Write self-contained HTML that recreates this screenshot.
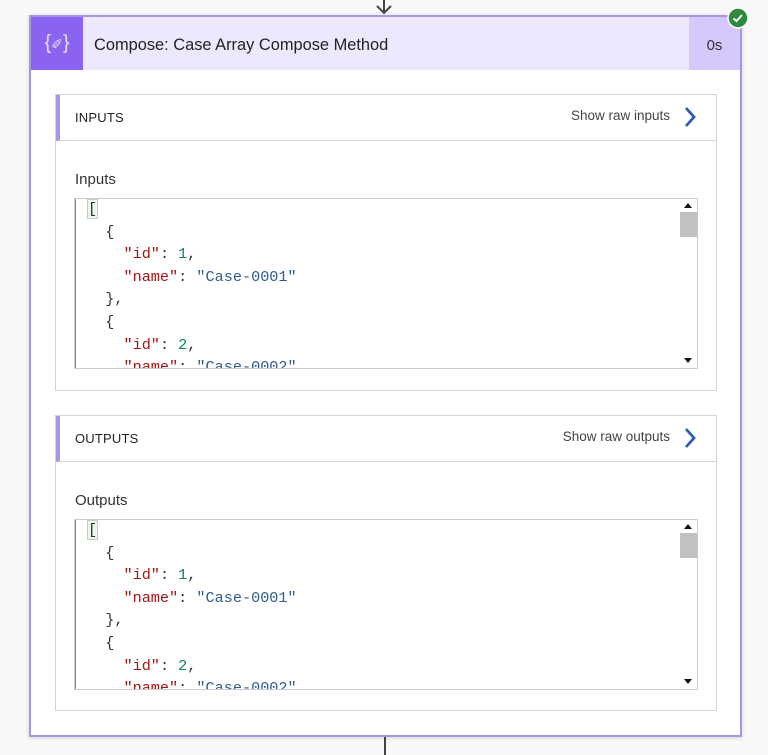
<!DOCTYPE html>
<html><head><style>
*{margin:0;padding:0;box-sizing:border-box}
body{width:768px;height:755px;background:#f8f8f8;font-family:"Liberation Sans",sans-serif;position:relative;overflow:hidden}
.card{position:absolute;left:29px;top:15px;width:713px;height:722px;background:#fff;border:2px solid #a796e6;box-shadow:0 1px 4px rgba(0,0,0,.15)}
.hdr{position:absolute;left:0;top:0;width:709px;height:53px;background:#ede8fd}
.ico{position:absolute;left:0;top:0;width:52px;height:53px;background:#8a63f0;color:#e6ddff;font-size:20px;text-align:center;line-height:53px}
.title{position:absolute;left:63px;top:0;line-height:56px;font-size:16.4px;color:#222}
.time{position:absolute;right:0;top:0;width:51px;height:53px;background:#d4c9fa;text-align:center;line-height:57px;font-size:15px;color:#333}
.sec{position:absolute;left:24px;width:662px;border:1px solid #d4d4d4;background:#fff}
.sh{height:46px;border-bottom:1px solid #d4d4d4;border-left:4px solid #a796e6;position:relative}
.sh .l{position:absolute;left:15px;top:15px;font-size:13px;color:#222;letter-spacing:.2px}
.sh .r{position:absolute;right:46px;top:13px;font-size:13.5px;color:#444}
.sh svg{position:absolute;right:20px;top:11px}
.lab{position:absolute;left:19px;font-size:15px;color:#333}
.code{position:absolute;left:18px;width:624px;height:171px;border:1px solid #ccc;overflow:hidden;font-family:"Liberation Mono",monospace;font-size:15.2px;line-height:22.6px;color:#333}
.code .gut{position:absolute;left:0;top:0;bottom:0;width:1px;background:#888}
.code pre{font-family:inherit;margin-left:12px;margin-top:-1px}
.k{color:#a31515}.n{color:#098658}.s{color:#2f5b93}
.sb{position:absolute;right:0;top:0;width:17px;height:100%;background:#fff}
.sb .th{position:absolute;left:0;top:13px;width:17px;height:25px;background:#c1c1c1}
.sb .u,.sb .d{position:absolute;left:4px;width:0;height:0;border-left:4px solid transparent;border-right:4px solid transparent}
.sb .u{top:4px;border-bottom:5px solid #111}
.sb .d{bottom:5px;border-top:5px solid #111}
.br{display:inline-block;border:1px solid #b9d6b9;background:#eef6ee;line-height:18px}
</style></head><body>
<svg style="position:absolute;left:374px;top:0" width="22" height="16"><path d="M10 0V13M3 6L10 13L17 6" stroke="#444" stroke-width="2" fill="none"/></svg>
<div style="position:absolute;left:384px;top:737px;width:2px;height:18px;background:#444"></div>
<div class="card">
 <div class="hdr">
  <div class="ico">{<span style="font-size:14px">✐</span>}</div>
  <div class="title">Compose: Case Array Compose Method</div>
  <div class="time">0s</div>
 </div>
 <div class="sec" style="top:77px;height:297px">
  <div class="sh"><span class="l">INPUTS</span><span class="r">Show raw inputs</span><svg width="12" height="22"><path d="M2 2L10 11L2 20" stroke="#2f5bb7" stroke-width="2.8" fill="none"/></svg></div>
  <div class="lab" style="top:76px">Inputs</div>
  <div class="code" style="top:103px"><div class="gut"></div><pre><span class="br">[</span>
  {
    <span class="k">"id"</span>: <span class="n">1</span>,
    <span class="k">"name"</span>: <span class="s">"Case-0001"</span>
  },
  {
    <span class="k">"id"</span>: <span class="n">2</span>,
    <span class="k">"name"</span>: <span class="s">"Case-0002"</span></pre><div class="sb"><div class="u"></div><div class="th"></div><div class="d"></div></div></div>
 </div>
 <div class="sec" style="top:398px;height:296px">
  <div class="sh"><span class="l">OUTPUTS</span><span class="r">Show raw outputs</span><svg width="12" height="22"><path d="M2 2L10 11L2 20" stroke="#2f5bb7" stroke-width="2.8" fill="none"/></svg></div>
  <div class="lab" style="top:76px">Outputs</div>
  <div class="code" style="top:103px"><div class="gut"></div><pre><span class="br">[</span>
  {
    <span class="k">"id"</span>: <span class="n">1</span>,
    <span class="k">"name"</span>: <span class="s">"Case-0001"</span>
  },
  {
    <span class="k">"id"</span>: <span class="n">2</span>,
    <span class="k">"name"</span>: <span class="s">"Case-0002"</span></pre><div class="sb"><div class="u"></div><div class="th"></div><div class="d"></div></div></div>
 </div>
</div>
<svg style="position:absolute;left:727px;top:7px" width="22" height="22"><circle cx="11" cy="11" r="10" fill="#2e8b3e" stroke="#fff" stroke-width="1.5"/><path d="M6.5 11.5L9.5 14L15 8" stroke="#fff" stroke-width="2" fill="none"/></svg>
</body></html>
